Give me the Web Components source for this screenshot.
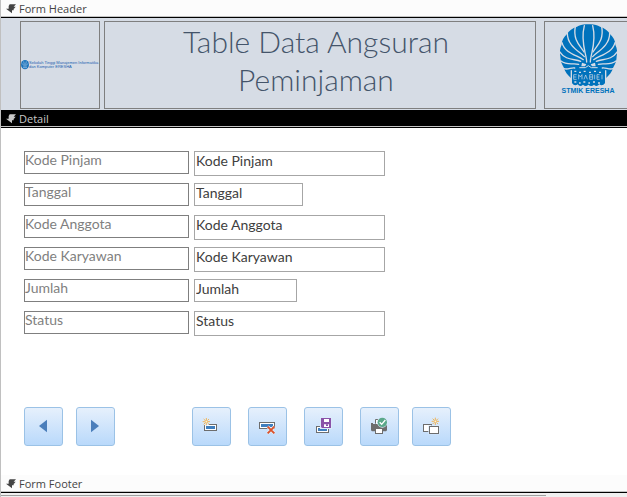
<!DOCTYPE html>
<html lang="id">
<head>
<meta charset="utf-8">
<title>Table Data Angsuran Peminjaman</title>
<style>
  body {
    margin: 0;
    background: #fff;
    font-family: Lato, Carlito, "Open Sans", sans-serif;
  }
</style>
</head>
<body>
<angsuran-form></angsuran-form>

<script>
// bar above each section of the form
class SectionBar extends HTMLElement {
  constructor() {
    super();
    this.attachShadow({ mode: "open" });
    this.shadowRoot.innerHTML = `<style>
    :host {
      display: flex;
      align-items: center;
      gap: 3px;
      box-sizing: border-box;
      height: 18px;
      padding-left: 5px;
      border-bottom: 1px solid #000;
      box-shadow: inset 0 -1px #c4c4c4;
      background: #fcfcfc;
      color: #444;
      font: 11px/16px "Open Sans", "Noto Sans", sans-serif;
    }

    :host([active]) {
      background: #000;
      color: #c8c8c8;
    }

    svg {
      width: 10px;
      height: 10px;
      fill: currentColor;
    }
</style>
<svg viewBox="0 0 30 30" aria-hidden="true"><path d="M11 1H30L23 8H29L24 14H23V19H18V28L0 14H8V6Z"/></svg>
<slot></slot>`;
  }
}

// small letterhead in the left cell of the header
class SchoolBanner extends HTMLElement {
  constructor() {
    super();
    this.attachShadow({ mode: "open" });
    this.shadowRoot.innerHTML = `<style>
    :host {
      display: flex;
      align-items: center;
      color: #1c5fb0;
      font: 4px/4px "Liberation Sans", Arial, sans-serif;
      white-space: nowrap;
    }

    svg {
      flex: none;
      width: 8px;
      height: 10px;
    }
</style>
<svg viewBox="0 0 24 30" aria-hidden="true">
  <ellipse cx="12" cy="14" rx="12" ry="14" fill="#1c75bc"/>
  <path d="M8 4Q11 12 9 22M16 4Q13 12 15 22M3 10L8 16M21 10L16 16M6 23H18" fill="none" stroke="#a5c4e2" stroke-width="2"/>
</svg>
<div><slot></slot></div>`;
  }
}

class SchoolLogo extends HTMLElement {
  constructor() {
    super();
    this.attachShadow({ mode: "open" });
    this.shadowRoot.innerHTML = `<style>
    :host {
      display: flex;
      flex-direction: column;
      align-items: center;
      color: #0072bc;
      font: bold 7px/8px "Liberation Sans", Arial, sans-serif;
    }

    svg {
      width: 57px;
      height: 63px;
    }
</style>
<svg viewBox="0 0 171 189" aria-hidden="true">
  <defs>
    <g id="half" fill="none" stroke="#d6dce5" stroke-linecap="round">
      <path d="M80 114C80 90 60 56 73 5" stroke-width="4"/>
      <path d="M72 84C62 66 38 50 46 8" stroke-width="4"/>
      <path d="M73 98C58 82 22 66 22 28" stroke-width="4"/>
      <path d="M70 107C52 94 14 88 6 56" stroke-width="4"/>
      <path d="M62 112C44 104 16 110 0 84" stroke-width="4"/>
      <path d="M56 121C40 116 22 126 3 111" stroke-width="4"/>
      <path d="M44 132C34 130 24 138 12 134" stroke-width="4"/>
      <path d="M34 140V178" stroke-width="4"/>
    </g>
  </defs>
  <path d="M85 1C100 -1 112 4 120 8C134 12 144 21 150 30C160 40 166 50 166 62C172 74 172 86 170 96C170 110 166 120 160 130C156 144 148 154 136 164V176Q127 188 118 181Q110 190 102 182Q94 190 85 182Q77 190 69 182Q60 190 53 181Q44 188 35 176V164C23 154 15 144 11 130C5 120 1 110 1 96C-1 86 -1 74 5 62C5 50 11 40 21 30C27 21 37 12 51 8C59 4 71 -1 85 1Z" fill="#0072bc"/>
  <use href="#half"/>
  <use href="#half" transform="translate(171) scale(-1 1)"/>
  <path d="M66 116L79 121L75 127H64ZM105 116L92 121L96 127H107Z" fill="#d6dce5"/>
  <path d="M58 131H76L85 125L94 131H113" fill="none" stroke="#d6dce5" stroke-width="3"/>
  <path d="M43 142H49M57 145H63M71 142H77M87 145H93M102 142H108M117 145H123M43 174H49M57 177H62M70 174H76M85 177H90M99 174H105M114 177H120" stroke="#d6dce5" stroke-width="4"/>
  <path d="M41 152H50M41 152V166H50M41 159H49M56 166V152L61 159L66 152V166M72 166L77 153L82 166M89 152V166H98V152ZM89 159H98M104 152V166M111 166V152H119M111 159H118M111 166H119M126 152V166" fill="none" stroke="#d6dce5" stroke-width="2"/>
</svg>
<slot></slot>`;
  }
}

// a label and its text box
class BoundField extends HTMLElement {
  constructor() {
    super();
    this.attachShadow({ mode: "open" });
  }

  connectedCallback() {
    let name = this.getAttribute("name");
    this.shadowRoot.innerHTML = `<style>
    :host {
      display: flex;
      align-items: flex-start;
      gap: 5px;
      height: 25px;
      font-size: 14px;
    }

    label {
      box-sizing: border-box;
      width: 165px;
      height: 23px;
      border: 1px solid #7f7f7f;
      color: #7f7f7f;
      line-height: 16px;
    }

    input {
      box-sizing: border-box;
      width: 191px;
      height: 25px;
      margin: 0;
      padding: 0 1px 6px;
      border: 1px solid #a6a6a6;
      border-radius: 0;
      background: #fff;
      color: #404040;
      font: inherit;
    }

    :host([size="date"]) input {
      width: 109px;
      height: 23px;
      padding-bottom: 4px;
    }

    :host([size="number"]) input {
      width: 103px;
      height: 23px;
      padding-bottom: 4px;
    }
</style>
<label for="value">${name}</label>
<input id="value" type="text" value="${name}">`;
  }
}

const SUN = `<path d="M0-11V-5M0 5V11M-11 0H-5M5 0H11M-8-8L-4-4M4 4L8 8M-8 8L-4 4M4-4L8-8" stroke="#eeb55c" stroke-width="3"/><circle r="4" fill="#fff3d0" stroke="#eeb55c" stroke-width="3"/>`;

const ICONS = {
  previous: `<path d="M69 38V76L45 57Z" fill="#4a7ebb"/>`,
  next: `<path d="M45 38V76L69 57Z" fill="#4a7ebb"/>`,
  add: `<rect x="37.5" y="52.5" width="36" height="18" fill="#fff" stroke="#6d6d6d" stroke-width="3"/>
    <rect x="42" y="57" width="27" height="9" fill="#3f7fbf"/>
    <circle cx="43" cy="44" r="11" fill="#dcebfb"/><g transform="translate(43 44)">${SUN}</g>`,
  remove: `<rect x="34.5" y="46.5" width="45" height="18" fill="#fff" stroke="#6d6d6d" stroke-width="3"/>
    <rect x="39" y="51" width="36" height="9" fill="#3f7fbf"/>
    <path d="M59 59L79 79M79 59L59 79" stroke="#e8f2fd" stroke-width="9"/>
    <path d="M59 59L79 79M79 59L59 79" stroke="#d9532c" stroke-width="6"/>`,
  save: `<rect x="37.5" y="58.5" width="36" height="18" fill="#fff" stroke="#6d6d6d" stroke-width="3"/>
    <rect x="42" y="63" width="27" height="9" fill="#3f7fbf"/>
    <path d="M48 30H84V66H48Z" fill="#dcebfb"/>
    <path d="M51 33H81V63H54L51 60Z" fill="#8a52a8"/>
    <path d="M60 36H75V45H60ZM60 52H75V60H60Z" fill="#fff"/><path d="M66 52H72V57H66Z" fill="#8a52a8"/>`,
  print: `<path d="M46.5 50V37.5H66V50" fill="#fff" stroke="#6d6d6d" stroke-width="3"/>
    <path d="M33 48H39V51H81V70L78 73H36L33 70Z" fill="#6d6d6d"/>
    <rect x="46.5" y="64.5" width="21" height="15" fill="#fff" stroke="#6d6d6d" stroke-width="3"/>
    <circle cx="67" cy="46" r="16" fill="#dcebfb"/><circle cx="67" cy="46" r="14" fill="#5aa88a"/>
    <path d="M59 46L65 52L76 39" fill="none" stroke="#fff" stroke-width="4"/>`,
  duplicate: `<rect x="34.5" y="52.5" width="24" height="21" fill="#fff" stroke="#6d6d6d" stroke-width="3"/>
    <rect x="49" y="55" width="34" height="27" fill="#dcebfb"/>
    <rect x="52.5" y="58.5" width="27" height="21" fill="#fff" stroke="#6d6d6d" stroke-width="3"/>
    <g transform="translate(70 43)">${SUN}</g>`
};

class RecordButton extends HTMLElement {
  constructor() {
    super();
    this.attachShadow({ mode: "open" });
  }

  connectedCallback() {
    this.shadowRoot.innerHTML = `<style>
    :host {
      display: block;
    }

    button {
      display: block;
      box-sizing: border-box;
      width: 39px;
      height: 39px;
      padding: 0;
      border: 1px solid #9bc2e6;
      border-radius: 3px;
      background: linear-gradient(#e6f0fc, #b9d9fb);
    }

    svg {
      display: block;
      width: 39px;
      height: 39px;
      margin: -1px;
    }
</style>
<button type="button" aria-label="${this.getAttribute("label")}">
  <svg viewBox="0 0 117 117" aria-hidden="true">${ICONS[this.getAttribute("icon")]}</svg>
</button>`;
  }
}

class AngsuranForm extends HTMLElement {
  constructor() {
    super();
    this.attachShadow({ mode: "open" });

    this.fields = [
      { name: "Kode Pinjam", size: "text" },
      { name: "Tanggal", size: "date" },
      { name: "Kode Anggota", size: "text" },
      { name: "Kode Karyawan", size: "text" },
      { name: "Jumlah", size: "number" },
      { name: "Status", size: "text" }
    ];

    this.render();
  }

  CSS() {
    return `<style>
    :host {
      display: flex;
      flex-direction: column;
      box-sizing: border-box;
      min-height: 100vh;
      border-left: 1px solid #c0c0c0;
    }

    header {
      display: grid;
      grid-template-columns: 80px 1fr 83px;
      column-gap: 4px;
      padding: 3px 0 1px 19px;
      background: #d6dce5;
    }

    .cell {
      box-sizing: border-box;
      height: 88px;
      border: 1px solid #7f7f7f;
    }

    h1 {
      margin: 0 4px 0 0;
      padding: 0 72px 0 64px;
      color: #44546a;
      font-size: 30px;
      font-weight: 300;
      line-height: 38px;
      text-align: center;
    }

    .logo {
      padding-top: 2px;
      padding-left: 4px;
      border-right: 0;
    }

    main {
      flex: 1;
      padding: 23px;
    }

    .fields {
      display: grid;
      gap: 7px;
    }

    .buttons, .group {
      display: flex;
    }

    .buttons {
      gap: 77px;
      margin-top: 71px;
    }

    .group {
      gap: 13px;
    }

    .edit {
      gap: 17px;
    }

    .scroll {
      box-sizing: border-box;
      height: 4px;
      padding-top: 2px;
      background: #f0f0f0;
    }

    .scroll div {
      width: 87%;
      height: 1px;
      background: #a0a0a0;
    }
</style>`;
  }

  renderFields() {
    return this.fields.map(item => {
      return `<bound-field name="${item.name}" size="${item.size}"></bound-field>`;
    }).join("\n");
  }

  render() {
    this.shadowRoot.innerHTML = `${this.CSS()}
<section-bar>Form Header</section-bar>
<header>
  <school-banner class="cell">Sekolah Tinggi Manajemen Informatika<br>dan Komputer ERESHA</school-banner>
  <h1 class="cell">Table Data Angsuran Peminjaman</h1>
  <school-logo class="cell logo">STMIK ERESHA</school-logo>
</header>
<section-bar active>Detail</section-bar>
<main>
  <div class="fields">${this.renderFields()}</div>
  <div class="buttons">
    <div class="group">
      <record-button icon="previous" label="Previous record"></record-button>
      <record-button icon="next" label="Next record"></record-button>
    </div>
    <div class="group">
      <div class="group edit">
        <record-button icon="add" label="Add record"></record-button>
        <record-button icon="remove" label="Delete record"></record-button>
        <record-button icon="save" label="Save record"></record-button>
        <record-button icon="print" label="Print record"></record-button>
      </div>
      <record-button icon="duplicate" label="Duplicate record"></record-button>
    </div>
  </div>
</main>
<section-bar>Form Footer</section-bar>
<div class="scroll"><div></div></div>`;
  }
}

customElements.define("section-bar", SectionBar);
customElements.define("school-banner", SchoolBanner);
customElements.define("school-logo", SchoolLogo);
customElements.define("bound-field", BoundField);
customElements.define("record-button", RecordButton);
customElements.define("angsuran-form", AngsuranForm);
</script>
</body>
</html>
